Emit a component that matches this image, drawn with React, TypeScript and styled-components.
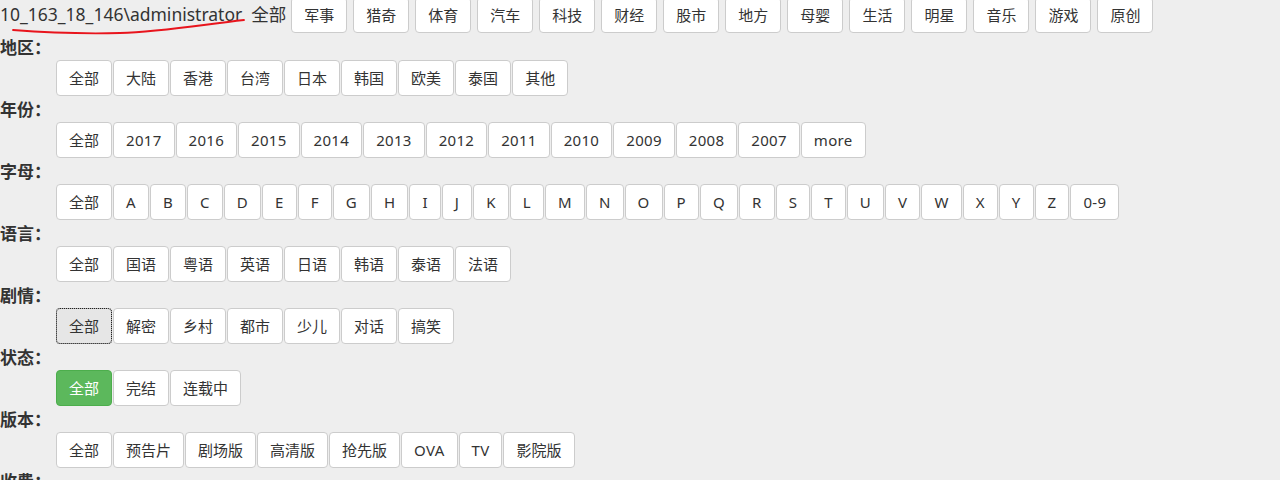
import React from "react";
import styled, { createGlobalStyle, css } from "styled-components";

const GlobalStyle = createGlobalStyle`
  html, body {
    margin: 0;
    padding: 0;
    background: #eeeeee;
    color: #333333;
    font-family: "Noto Sans", "Noto Sans CJK SC", sans-serif;
  }
`;

const Root = styled.div`
  display: flow-root;
  position: relative;
  overflow: hidden;
  height: 480px;
`;

const TopRow = styled.div`
  display: flex;
  align-items: baseline;
  margin-top: -3px;
  margin-bottom: 3px;
  height: 36px;
`;

const TopText = styled.span<{ $gap?: number }>`
  font-size: 17.5px;
  line-height: 24px;
  white-space: nowrap;
  margin-right: ${(p) => p.$gap ?? 0}px;
`;

const TopButtons = styled.div`
  display: flex;
  gap: 6px;
  align-items: baseline;
`;

const Group = styled.section`
  display: block;
`;

const Label = styled.div`
  font-size: 17px;
  font-weight: bold;
  line-height: 24px;
  height: 24px;
  white-space: nowrap;
`;

const ButtonRow = styled.div`
  display: flex;
  gap: 1px;
  padding-left: 56px;
  margin-bottom: 2px;
`;

type Variant = "default" | "focus" | "success";

const Btn = styled.button<{ $variant?: Variant; $latin?: boolean }>`
  box-sizing: border-box;
  height: 36px;
  padding: 6px 12px;
  font-family: "Noto Sans", "Noto Sans CJK SC", sans-serif;
  font-size: 15px;
  line-height: 22px;
  letter-spacing: ${(p) => (p.$latin ? "0.3px" : "0")};
  color: #333333;
  background: #ffffff;
  border: 1px solid #cccccc;
  border-radius: 4px;
  white-space: nowrap;
  cursor: pointer;
  ${(p) =>
    p.$variant === "focus" &&
    css`
      background: #e6e6e6;
      border-color: #adadad;
      outline: 1px dotted #222222;
      outline-offset: -1px;
    `}
  ${(p) =>
    p.$variant === "success" &&
    css`
      background: #5cb85c;
      border-color: #4cae4c;
      color: #ffffff;
    `}
`;

const Scribble = styled.svg`
  position: absolute;
  left: 0;
  top: 0;
  width: 260px;
  height: 40px;
  pointer-events: none;
  overflow: visible;
`;

const topCats = ["军事", "猎奇", "体育", "汽车", "科技", "财经", "股市", "地方", "母婴", "生活", "明星", "音乐", "游戏", "原创"];

const groups: { label: string; items: string[]; active?: { index: number; variant: Variant } }[] = [
  { label: "地区：", items: ["全部", "大陆", "香港", "台湾", "日本", "韩国", "欧美", "泰国", "其他"] },
  { label: "年份：", items: ["全部", "2017", "2016", "2015", "2014", "2013", "2012", "2011", "2010", "2009", "2008", "2007", "more"] },
  {
    label: "字母：",
    items: ["全部", ..."ABCDEFGHIJKLMNOPQRSTUVWXYZ".split(""), "0-9"],
  },
  { label: "语言：", items: ["全部", "国语", "粤语", "英语", "日语", "韩语", "泰语", "法语"] },
  { label: "剧情：", items: ["全部", "解密", "乡村", "都市", "少儿", "对话", "搞笑"], active: { index: 0, variant: "focus" } },
  { label: "状态：", items: ["全部", "完结", "连载中"], active: { index: 0, variant: "success" } },
  { label: "版本：", items: ["全部", "预告片", "剧场版", "高清版", "抢先版", "OVA", "TV", "影院版"] },
  { label: "收费：", items: ["全部", "免费", "付费", "VIP"] },
];

const isLatin = (s: string) => /^[\x00-\x7f]+$/.test(s);

export default function App() {
  return (
    <Root>
      <GlobalStyle />
      <TopRow>
        <TopText $gap={9}>10_163_18_146\administrator</TopText>
        <TopText $gap={5}>全部</TopText>
        <TopButtons>
          {topCats.map((c) => (
            <Btn key={c}>{c}</Btn>
          ))}
        </TopButtons>
      </TopRow>
      {groups.map((g) => (
        <Group key={g.label}>
          <Label>{g.label}</Label>
          <ButtonRow>
            {g.items.map((it, i) => (
              <Btn
                key={it + i}
                $latin={isLatin(it)}
                $variant={g.active && g.active.index === i ? g.active.variant : "default"}
              >
                {it}
              </Btn>
            ))}
          </ButtonRow>
        </Group>
      ))}
      <Scribble viewBox="0 0 260 40">
        <path
          d="M13 30 C 45 32.5, 80 34, 120 33 C 160 32, 200 25, 244 20"
          fill="none"
          stroke="#e8141c"
          strokeWidth="1.8"
          strokeLinecap="round"
        />
      </Scribble>
    </Root>
  );
}
